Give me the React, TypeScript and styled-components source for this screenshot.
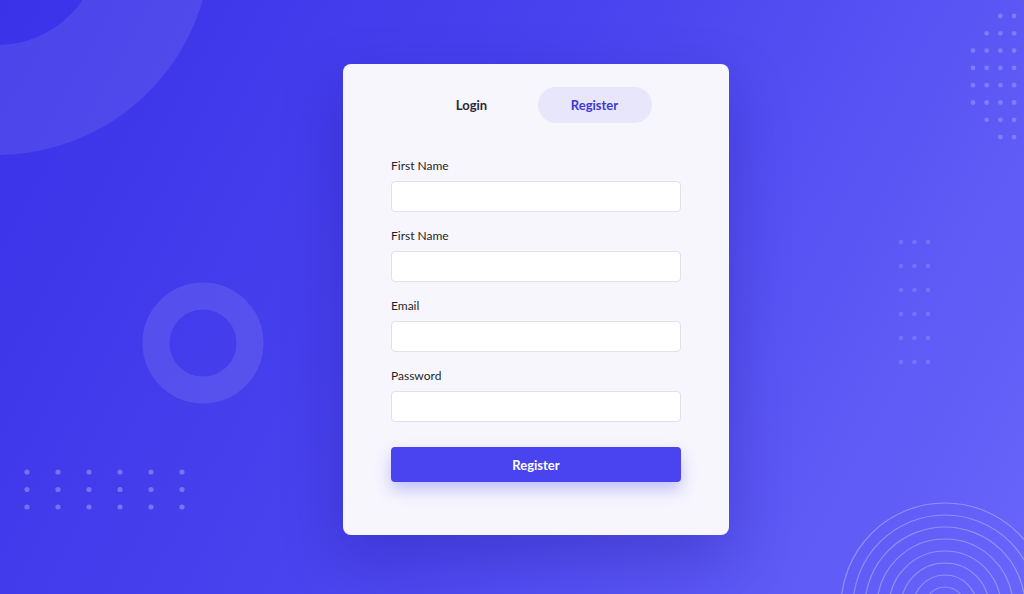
import React, { FC } from 'react';
import styled, { createGlobalStyle } from 'styled-components';

const GlobalStyle = createGlobalStyle`
  html, body {
    margin: 0;
    padding: 0;
  }
  body {
    font-family: Lato, "Open Sans", Arial, sans-serif;
  }
`;

const Page = styled.div`
  position: relative;
  display: flex;
  align-items: center;
  justify-content: center;
  width: 1024px;
  height: 594px;
  padding: 5px 0 0 48px;
  box-sizing: border-box;
  overflow: hidden;
  background: linear-gradient(118deg, #3a32e9 0%, #4843ee 45%, #5d5af6 80%, #6765fa 100%);
`;

const Deco = styled.svg<{ $x: number; $y: number }>`
  position: absolute;
  left: ${(p) => p.$x}px;
  top: ${(p) => p.$y}px;
  overflow: visible;
  pointer-events: none;
`;

const Card = styled.div`
  position: relative;
  z-index: 1;
  width: 386px;
  padding: 23px 48px 53px;
  box-sizing: border-box;
  border-radius: 8px;
  background: #f7f6fd;
  box-shadow: 0 24px 60px rgba(24, 14, 130, 0.28);
`;

const Tabs = styled.div`
  display: flex;
  justify-content: center;
  gap: 9px;
  margin: 0 6px 35px 0;
`;

const Tab = styled.button<{ $active?: boolean }>`
  width: 114px;
  height: 36px;
  border: none;
  border-radius: 18px;
  font-family: Lato, "Open Sans", Arial, sans-serif;
  font-size: 13px;
  font-weight: 700;
  color: ${(p) => (p.$active ? '#3e38d6' : '#2b2a3a')};
  background: ${(p) => (p.$active ? '#e7e6fb' : 'transparent')};
  cursor: pointer;
`;

const Form = styled.form`
  display: flex;
  flex-direction: column;
  gap: 16px;
`;

const Field = styled.label`
  display: flex;
  flex-direction: column;
  gap: 7px;
`;

const LabelText = styled.span`
  font-size: 12px;
  line-height: 16px;
  color: #1f1f2a;
`;

const Input = styled.input`
  height: 31px;
  box-sizing: border-box;
  border: 1px solid #e1e0ec;
  border-radius: 4px;
  background: #ffffff;
  padding: 0 10px;
  font-size: 13px;
  outline: none;
`;

const Submit = styled.button`
  height: 35px;
  margin-top: 9px;
  border: none;
  border-radius: 4px;
  background: #4944ef;
  color: #ffffff;
  font-family: Lato, "Open Sans", Arial, sans-serif;
  font-size: 13px;
  font-weight: 700;
  box-shadow: 0 8px 16px rgba(73, 68, 239, 0.3);
  cursor: pointer;
`;

const fields = ['First Name', 'First Name', 'Email', 'Password'];

// dot pattern top right: columns present in each row
const topRightRows: number[][] = [
  [2, 3],
  [1, 2, 3],
  [0, 1, 2, 3],
  [0, 1, 2, 3],
  [0, 1, 2, 3],
  [0, 1, 2, 3],
  [1, 2, 3],
  [2, 3],
];

const arcRadii = [104, 92, 80, 68, 56, 44, 32, 20];

const App: FC = () => (
  <>
    <GlobalStyle />
    <Page>
      <Deco $x={-3} $y={-59} width="1" height="1">
        <circle cx="0" cy="0" r="159" fill="none" stroke="rgba(255,255,255,0.09)" strokeWidth="110" />
      </Deco>
      <Deco $x={203} $y={343} width="1" height="1">
        <circle cx="0" cy="0" r="47" fill="none" stroke="rgba(255,255,255,0.1)" strokeWidth="27" />
      </Deco>
      <Deco $x={27} $y={472} width="160" height="40">
        {[0, 1, 2].map((r) =>
          [0, 1, 2, 3, 4, 5].map((c) => (
            <circle key={`${r}-${c}`} cx={c * 31} cy={r * 17.5} r="2.6" fill="rgba(255,255,255,0.28)" />
          )),
        )}
      </Deco>
      <Deco $x={973} $y={16} width="60" height="130">
        {topRightRows.map((cols, r) =>
          cols.map((c) => (
            <circle key={`${r}-${c}`} cx={c * 13.7} cy={r * 17.3} r="2.4" fill="rgba(255,255,255,0.22)" />
          )),
        )}
      </Deco>
      <Deco $x={901} $y={242} width="40" height="130">
        {[0, 1, 2, 3, 4, 5].map((r) =>
          [0, 1, 2].map((c) => (
            <circle key={`${r}-${c}`} cx={c * 13.5} cy={r * 24} r="2.3" fill="rgba(255,255,255,0.15)" />
          )),
        )}
      </Deco>
      <Deco $x={945} $y={607} width="1" height="1">
        {arcRadii.map((r) => (
          <circle key={r} cx="0" cy="0" r={r} fill="none" stroke="rgba(255,255,255,0.3)" strokeWidth="1.2" />
        ))}
      </Deco>

      <Card>
        <Tabs>
          <Tab type="button">Login</Tab>
          <Tab type="button" $active>Register</Tab>
        </Tabs>
        <Form onSubmit={(e) => e.preventDefault()}>
          {fields.map((name, i) => (
            <Field key={i}>
              <LabelText>{name}</LabelText>
              <Input type={name === 'Password' ? 'password' : name === 'Email' ? 'email' : 'text'} />
            </Field>
          ))}
          <Submit type="submit">Register</Submit>
        </Form>
      </Card>
    </Page>
  </>
);

export default App;
